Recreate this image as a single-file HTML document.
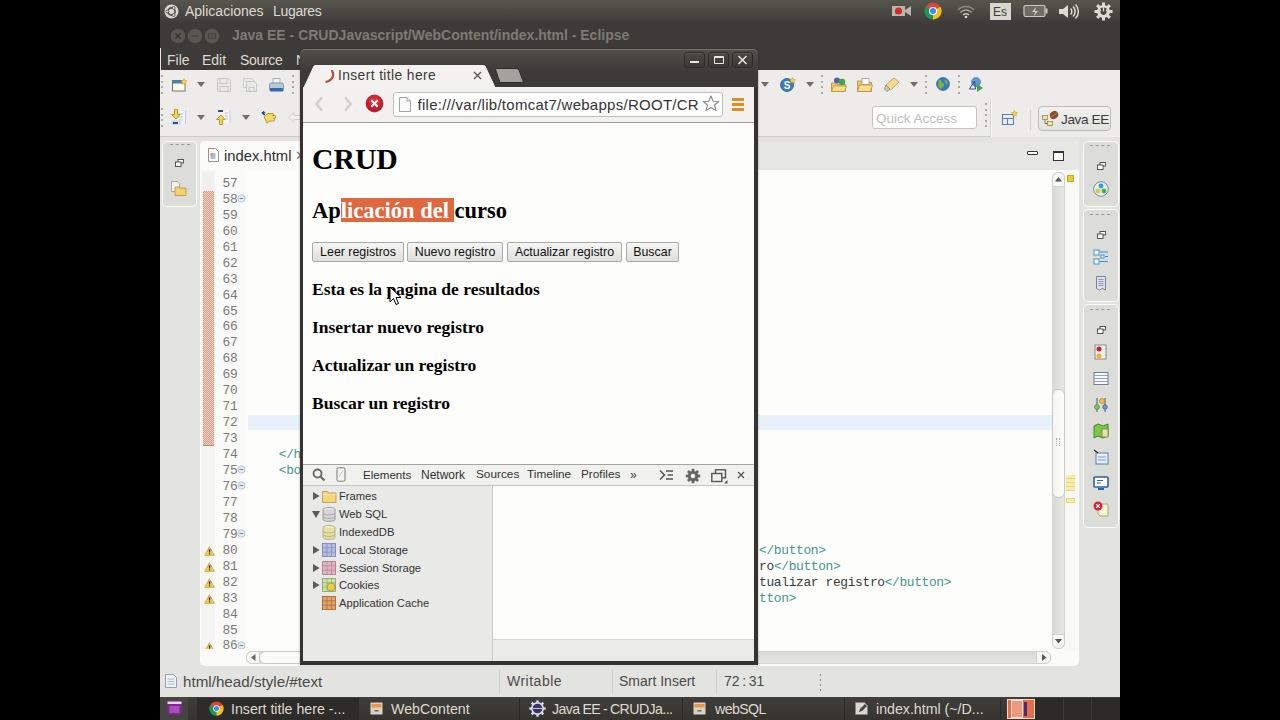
<!DOCTYPE html>
<html><head><meta charset="utf-8">
<style>
*{margin:0;padding:0;box-sizing:border-box}
html,body{width:1280px;height:720px;overflow:hidden;background:#000}
body{position:relative;font-family:"Liberation Sans",sans-serif}
.a{position:absolute}
.t{position:absolute;white-space:nowrap;line-height:1}
.mono{font-family:"Liberation Mono",monospace}
.serif{font-family:"Liberation Serif",serif}
</style></head><body>
<!-- screen -->
<div class="a" style="left:160px;top:0;width:960px;height:720px;background:#e3e3e0;overflow:hidden"></div>

<!-- top panel -->
<div class="a" style="left:160px;top:0;width:960px;height:22px;background:linear-gradient(#57564e,#3e3d39)"></div>
<!-- eclipse title + menubar -->
<div class="a" style="left:160px;top:22px;width:960px;height:48px;background:#3c3b37"></div>


<!-- ubuntu logo -->
<svg class="a" style="left:164px;top:4px" width="15" height="15" viewBox="0 0 15 15">
<circle cx="7.5" cy="7.5" r="7" fill="#dcd8cf"/>
<circle cx="7.5" cy="7.5" r="3.6" fill="none" stroke="#4a4943" stroke-width="1.6"/>
<circle cx="3.3" cy="7.5" r="1.5" fill="#dcd8cf" stroke="#4a4943" stroke-width="0.8"/>
<circle cx="9.6" cy="3.9" r="1.5" fill="#dcd8cf" stroke="#4a4943" stroke-width="0.8"/>
<circle cx="9.6" cy="11.1" r="1.5" fill="#dcd8cf" stroke="#4a4943" stroke-width="0.8"/>
</svg>
<div class="t" style="left:185px;top:4px;font-size:14px;color:#dfdbd2">Aplicaciones</div>
<div class="t" style="left:273px;top:4px;font-size:14px;color:#dfdbd2;letter-spacing:-0.3px">Lugares</div>

<!-- tray icons -->
<svg class="a" style="left:891px;top:3px" width="22" height="16" viewBox="0 0 22 16">
<path d="M1 3h13v10H1z" fill="#b9b6ae" rx="2"/><path d="M14 7l6-4v10l-6-4z" fill="#b9b6ae"/>
<circle cx="7.5" cy="8" r="3.6" fill="#d42c2c"/></svg>
<svg class="a" style="left:924px;top:2px" width="18" height="18" viewBox="0 0 18 18">
<circle cx="9" cy="9" r="8.5" fill="#db4437"/>
<path d="M9 9 L1.6 4.8 A8.5 8.5 0 0 0 9 17.5z" fill="#0f9d58"/>
<path d="M9 9 L16.4 4.8 A8.5 8.5 0 0 1 9 17.5z" fill="#f4c20d"/>
<circle cx="9" cy="9" r="4" fill="#fff"/><circle cx="9" cy="9" r="3" fill="#4285f4"/></svg>
<svg class="a" style="left:956px;top:4px" width="20" height="15" viewBox="0 0 20 15">
<path d="M2 6 A11 11 0 0 1 18 6" fill="none" stroke="#8d8a83" stroke-width="1.5"/>
<path d="M4.5 8.5 A7.5 7.5 0 0 1 15.5 8.5" fill="none" stroke="#a9a69f" stroke-width="1.5"/>
<path d="M7 11 A4 4 0 0 1 13 11" fill="none" stroke="#cfccc4" stroke-width="1.5"/>
<circle cx="10" cy="13" r="1.3" fill="#dfdbd2"/></svg>
<div class="a" style="left:990px;top:3px;width:21px;height:17px;background:#d9d6ce"></div>
<div class="t" style="left:993px;top:6px;font-size:12px;color:#3c3b37">Es</div>
<svg class="a" style="left:1023px;top:4px" width="26" height="14" viewBox="0 0 26 14">
<rect x="1" y="1.5" width="21" height="11" rx="1.5" fill="#6f6d67" stroke="#cdc9c1" stroke-width="1.2"/>
<rect x="22.5" y="4.5" width="2" height="5" fill="#cdc9c1"/>
<path d="M13 3 L9 8 h3 l-1 4 l4-5 h-3z" fill="#cdc9c1"/></svg>
<svg class="a" style="left:1058px;top:3px" width="22" height="17" viewBox="0 0 22 17">
<path d="M1 6h4l5-4v13l-5-4H1z" fill="#dfdbd2"/>
<path d="M12.5 5.5 A4 4 0 0 1 12.5 11.5" fill="none" stroke="#dfdbd2" stroke-width="1.5"/>
<path d="M15 3.5 A7 7 0 0 1 15 13.5" fill="none" stroke="#dfdbd2" stroke-width="1.5"/>
<path d="M17.5 1.5 A10 10 0 0 1 17.5 15.5" fill="none" stroke="#dfdbd2" stroke-width="1.5"/></svg>
<svg class="a" style="left:1094px;top:2px" width="19" height="19" viewBox="0 0 19 19">
<g fill="#dfdbd2"><circle cx="9.5" cy="9.5" r="6.5"/>
<rect x="8" y="0.5" width="3" height="4"/><rect x="8" y="14.5" width="3" height="4"/>
<rect x="0.5" y="8" width="4" height="3"/><rect x="14.5" y="8" width="4" height="3"/>
<rect x="8" y="0.5" width="3" height="4" transform="rotate(45 9.5 9.5)"/><rect x="8" y="14.5" width="3" height="4" transform="rotate(45 9.5 9.5)"/>
<rect x="0.5" y="8" width="4" height="3" transform="rotate(45 9.5 9.5)"/><rect x="14.5" y="8" width="4" height="3" transform="rotate(45 9.5 9.5)"/></g>
<circle cx="9.5" cy="9.5" r="4" fill="#45443f"/>
<path d="M6.8 7.5 A3.6 3.6 0 1 0 12.2 7.5" fill="none" stroke="#dfdbd2" stroke-width="1.4"/>
<rect x="8.8" y="5" width="1.4" height="4.5" fill="#dfdbd2"/></svg>

<!-- eclipse window buttons -->
<svg class="a" style="left:170px;top:28px" width="52" height="16" viewBox="0 0 52 16">
<circle cx="8" cy="8" r="7.3" fill="#57564f"/><circle cx="25" cy="8" r="7.3" fill="#57564f"/><circle cx="42" cy="8" r="7.3" fill="#57564f"/>
<path d="M5.3 5.3l5.4 5.4M10.7 5.3l-5.4 5.4" stroke="#35342f" stroke-width="1.4"/>
<rect x="21.5" y="7.3" width="7" height="1.4" fill="#45443f"/>
<rect x="38.6" y="5.6" width="6.8" height="4.8" fill="none" stroke="#45443f" stroke-width="1.2"/>
</svg>
<div class="t" style="left:232px;top:28px;font-size:14px;font-weight:bold;color:#7c7b74">Java EE - CRUDJavascript/WebContent/index.html - Eclipse</div>

<!-- menubar -->
<div class="a" style="left:160px;top:48px;width:1px;height:22px;background:#e8e6e0"></div>
<div class="t" style="left:167px;top:53px;font-size:14px;color:#dfdbd2">File</div>
<div class="t" style="left:202px;top:53px;font-size:14px;color:#dfdbd2">Edit</div>
<div class="t" style="left:240px;top:53px;font-size:14px;color:#dfdbd2;letter-spacing:-0.3px">Source</div>
<div class="t" style="left:296px;top:53px;font-size:14px;color:#dfdbd2">N</div>


<!-- eclipse toolbar -->
<div class="a" style="left:160px;top:70px;width:960px;height:67px;background:#edecea"></div>

<div class="a" style="left:161px;top:75.0px;width:2px;height:2px;background:#a9a8a4"></div><div class="a" style="left:161px;top:80.5px;width:2px;height:2px;background:#a9a8a4"></div><div class="a" style="left:161px;top:86.0px;width:2px;height:2px;background:#a9a8a4"></div><div class="a" style="left:161px;top:91.5px;width:2px;height:2px;background:#a9a8a4"></div><div class="a" style="left:161px;top:108.0px;width:2px;height:2px;background:#a9a8a4"></div><div class="a" style="left:161px;top:113.5px;width:2px;height:2px;background:#a9a8a4"></div><div class="a" style="left:161px;top:119.0px;width:2px;height:2px;background:#a9a8a4"></div><div class="a" style="left:161px;top:124.5px;width:2px;height:2px;background:#a9a8a4"></div><div class="a" style="left:292px;top:75.0px;width:2px;height:2px;background:#a9a8a4"></div><div class="a" style="left:292px;top:80.5px;width:2px;height:2px;background:#a9a8a4"></div><div class="a" style="left:292px;top:86.0px;width:2px;height:2px;background:#a9a8a4"></div><div class="a" style="left:292px;top:91.5px;width:2px;height:2px;background:#a9a8a4"></div><svg class="a" style="left:172px;top:78px" width="15" height="14" viewBox="0 0 15 14">
<rect x="0.5" y="2.5" width="12.5" height="10.5" fill="#fdfbe8" stroke="#6e7a76" stroke-width="1"/>
<rect x="1" y="3" width="11.5" height="2.5" fill="#3d84b8"/>
<path d="M12 0.5l1.2 2 2 .5-1.5 1.5.3 2-2-1-2 1 .3-2L9 3l2-.5z" fill="#f8d256" stroke="#c99a1e" stroke-width="0.5"/></svg><svg class="a" style="left:197px;top:82px" width="8" height="5" viewBox="0 0 8 5"><path d="M0 0h8L4 5z" fill="#6e6e6c"/></svg><svg class="a" style="left:197px;top:115px" width="8" height="5" viewBox="0 0 8 5"><path d="M0 0h8L4 5z" fill="#6e6e6c"/></svg><svg class="a" style="left:242px;top:115px" width="8" height="5" viewBox="0 0 8 5"><path d="M0 0h8L4 5z" fill="#6e6e6c"/></svg><svg class="a" style="left:217px;top:78px" width="14" height="14" viewBox="0 0 14 14">
<path d="M0.5 0.5h11l2 2v11H0.5z" fill="#e9e9e6" stroke="#c6c6c2"/><rect x="3" y="0.5" width="7" height="5" fill="none" stroke="#c6c6c2"/><rect x="3" y="8.5" width="8" height="5" fill="none" stroke="#c6c6c2"/></svg>
<svg class="a" style="left:243px;top:78px" width="15" height="14" viewBox="0 0 15 14">
<path d="M0.5 0.5h8l2 2v7H0.5z" fill="#e9e9e6" stroke="#cfcfcb"/><path d="M3.5 3.5h8l2 2v8H3.5z" fill="#e9e9e6" stroke="#c6c6c2"/><rect x="6" y="9.5" width="5" height="4" fill="none" stroke="#c6c6c2"/></svg>
<svg class="a" style="left:269px;top:78px" width="15" height="14" viewBox="0 0 15 14">
<rect x="4" y="0.5" width="7" height="6" fill="#f4f4f2" stroke="#a9b3bc"/>
<rect x="0.5" y="5" width="14" height="7" rx="2" fill="#b9c9d6" stroke="#7d98b0"/>
<rect x="0.5" y="10" width="14" height="3.5" rx="1.5" fill="#3b66a8"/></svg><svg class="a" style="left:171px;top:109px" width="15" height="16" viewBox="0 0 15 16">
<rect x="5" y="2" width="9" height="13" fill="#f2f4f8"/><path d="M7 5h5M7 8h5M8 11h4" stroke="#b7c3d3"/><rect x="14" y="2" width="1" height="13" fill="#c5c9cf"/>
<rect x="2" y="13" width="5" height="2" fill="#2c4b8a"/><rect x="1" y="12" width="8" height="4" fill="none" stroke="#b3c6e6" stroke-width="0.7"/>
<path d="M3.5 0.5h3v5h2.5L5 10 0.5 5.5H3.5z" fill="#f7d44d" stroke="#b98f18" stroke-width="0.9"/></svg>
<svg class="a" style="left:216px;top:109px" width="15" height="16" viewBox="0 0 15 16">
<rect x="5" y="1" width="9" height="13" fill="#f2f4f8"/><path d="M9 4h3M9 7h3M9 10h3" stroke="#b7c3d3"/><rect x="13.5" y="1" width="1" height="13" fill="#c5c9cf"/>
<rect x="2" y="1" width="5" height="2" fill="#2c4b8a"/>
<path d="M3.5 15.5h3v-5h2.5L5 6 0.5 10.5H3.5z" fill="#f7d44d" stroke="#b98f18" stroke-width="0.9"/></svg>
<svg class="a" style="left:261px;top:111px" width="16" height="13" viewBox="0 0 16 13">
<path d="M1 3 4 1M1 1l3 3M2.5 0v4M0.5 2h4" stroke="#1d3f8a" stroke-width="0.9"/>
<path d="M3 5.5l4-3h4.5c1.5 0 1.5 2 0 2h2c1.8 0 1.8 3 0 3h-1c1.5 0 1.5 2.5 0 2.5H9L6 12z" fill="#f7d869" stroke="#b38f1f" stroke-width="0.9"/></svg>
<svg class="a" style="left:288px;top:111px" width="13" height="13" viewBox="0 0 13 13">
<path d="M0.5 6.5 6 1.5v3h7v4H6v3z" fill="#f0f0ee" stroke="#cfcfcc"/></svg>
<svg class="a" style="left:761px;top:82px" width="8" height="5" viewBox="0 0 8 5"><path d="M0 0h8L4 5z" fill="#6e6e6c"/></svg><svg class="a" style="left:806px;top:82px" width="8" height="5" viewBox="0 0 8 5"><path d="M0 0h8L4 5z" fill="#6e6e6c"/></svg><svg class="a" style="left:910px;top:82px" width="8" height="5" viewBox="0 0 8 5"><path d="M0 0h8L4 5z" fill="#6e6e6c"/></svg><div class="a" style="left:821px;top:75.0px;width:2px;height:2px;background:#a9a8a4"></div><div class="a" style="left:821px;top:80.5px;width:2px;height:2px;background:#a9a8a4"></div><div class="a" style="left:821px;top:86.0px;width:2px;height:2px;background:#a9a8a4"></div><div class="a" style="left:821px;top:91.5px;width:2px;height:2px;background:#a9a8a4"></div><div class="a" style="left:925px;top:75.0px;width:2px;height:2px;background:#a9a8a4"></div><div class="a" style="left:925px;top:80.5px;width:2px;height:2px;background:#a9a8a4"></div><div class="a" style="left:925px;top:86.0px;width:2px;height:2px;background:#a9a8a4"></div><div class="a" style="left:925px;top:91.5px;width:2px;height:2px;background:#a9a8a4"></div><div class="a" style="left:958px;top:75.0px;width:2px;height:2px;background:#a9a8a4"></div><div class="a" style="left:958px;top:80.5px;width:2px;height:2px;background:#a9a8a4"></div><div class="a" style="left:958px;top:86.0px;width:2px;height:2px;background:#a9a8a4"></div><div class="a" style="left:958px;top:91.5px;width:2px;height:2px;background:#a9a8a4"></div><svg class="a" style="left:780px;top:77px" width="16" height="15" viewBox="0 0 16 15">
<circle cx="7" cy="8" r="6.5" fill="#3b7bbf" stroke="#2a5c95" stroke-width="0.8"/>
<text x="7" y="12" font-family="Liberation Sans" font-weight="bold" font-size="10" fill="#fff" text-anchor="middle">S</text>
<path d="M12.5 0.5l1 1.8 2 .4-1.4 1.4.3 2-1.9-.9-1.9.9.3-2L9.5 2.7l2-.4z" fill="#f5d34a" stroke="#b89420" stroke-width="0.5"/></svg>
<svg class="a" style="left:831px;top:77px" width="16" height="15" viewBox="0 0 16 15">
<path d="M0.5 6h5l1 1.5h8v7H0.5z" fill="#f3c564" stroke="#b98e35" stroke-width="0.8"/>
<path d="M2.5 9h13l-2 5.5H0.5z" fill="#fbdf8f" stroke="#b98e35" stroke-width="0.8"/>
<circle cx="6" cy="3.5" r="3" fill="#5c5ca8"/><circle cx="11" cy="5" r="3.2" fill="#3fa44a"/></svg>
<svg class="a" style="left:857px;top:78px" width="16" height="14" viewBox="0 0 16 14">
<path d="M0.5 3h5l1 1.5h8v9H0.5z" fill="#f3c564" stroke="#b98e35" stroke-width="0.8"/>
<rect x="5" y="0.5" width="7" height="6" fill="#fff" stroke="#8aa0b5" stroke-width="0.8"/>
<path d="M2.5 7h13l-2 6.5H0.5z" fill="#fbdf8f" stroke="#b98e35" stroke-width="0.8"/></svg>
<svg class="a" style="left:884px;top:77px" width="16" height="15" viewBox="0 0 16 15">
<path d="M10 1l5 4-8 8-4-1-1-4z" fill="#f6d98a" stroke="#b99a52" stroke-width="0.8"/>
<path d="M2 8l4 4-3 2.5L0.5 12z" fill="#c9c4b6" stroke="#8c877a" stroke-width="0.8"/></svg>
<svg class="a" style="left:936px;top:77px" width="14" height="14" viewBox="0 0 14 14">
<circle cx="7" cy="7" r="6.5" fill="#3479c2" stroke="#24558c" stroke-width="0.6"/>
<path d="M4 2.5c2 1 1 3 3 3.5s1 3 -.5 4.5S3 12 2.5 9 1.5 4 4 2.5z" fill="#79b544"/>
<path d="M9 2c2 1 3 3 2.5 5s-1.5 1-2-1S8 3 9 2z" fill="#79b544"/></svg>
<svg class="a" style="left:969px;top:77px" width="15" height="15" viewBox="0 0 15 15">
<circle cx="7" cy="5" r="4.5" fill="#5f9bcf" stroke="#3a6f9e" stroke-width="0.6"/>
<path d="M0.5 12l5-8 1 8z" fill="none" stroke="#2c4f8c" stroke-width="1"/>
<path d="M8 7v8l6-4z" fill="#3aa44a"/></svg>
<div class="a" style="left:872px;top:106px;width:105px;height:23px;background:#fff;border:1px solid #c3c3bf;border-radius:3px"></div>
<div class="t" style="left:876px;top:111.5px;font-size:13.5px;color:#bdbdb9">Quick Access</div><div class="a" style="left:985px;top:103.0px;width:2px;height:2px;background:#a9a8a4"></div><div class="a" style="left:985px;top:108.5px;width:2px;height:2px;background:#a9a8a4"></div><div class="a" style="left:985px;top:114.0px;width:2px;height:2px;background:#a9a8a4"></div><div class="a" style="left:985px;top:119.5px;width:2px;height:2px;background:#a9a8a4"></div><div class="a" style="left:985px;top:125.0px;width:2px;height:2px;background:#a9a8a4"></div><div class="a" style="left:990px;top:100px;width:1px;height:37px;background:#d5d5d1"></div><div class="a" style="left:991px;top:100px;width:1px;height:37px;background:#fafaf9"></div><svg class="a" style="left:1002px;top:110px" width="16" height="16" viewBox="0 0 16 16">
<rect x="0.5" y="4.5" width="11" height="10" fill="#e8eef6" stroke="#5a7ea8"/>
<path d="M0.5 8.5h11M5.5 8.5v6" stroke="#5a7ea8"/>
<path d="M12.5 0.5l1 1.8 2 .4-1.4 1.4.3 2-1.9-.9-1.9.9.3-2L9.5 2.7l2-.4z" fill="#f5d34a" stroke="#b89420" stroke-width="0.5"/></svg>
<div class="a" style="left:1030px;top:110px;width:1px;height:20px;background:#d0d0cc"></div>
<div class="a" style="left:1038px;top:106px;width:73px;height:25px;background:linear-gradient(#f1f1ef,#e2e2df);border:1px solid #bdbdb9;border-radius:4px"></div>
<svg class="a" style="left:1042px;top:110px" width="17" height="17" viewBox="0 0 17 17">
<rect x="0.5" y="5.5" width="5" height="4" fill="#f8e39a" stroke="#9c8b4c" stroke-width="0.8"/>
<rect x="5.5" y="11.5" width="5" height="4" fill="#f8e39a" stroke="#9c8b4c" stroke-width="0.8"/>
<path d="M3 9.5v4h2.5" fill="none" stroke="#555" stroke-width="0.8"/>
<ellipse cx="12" cy="5" rx="4.3" ry="3.8" fill="#8a4a2a" transform="rotate(-30 12 5)"/>
<path d="M9 7l6-4" stroke="#c9885d" stroke-width="0.8"/></svg>
<div class="t" style="left:1061px;top:112.5px;font-size:13.6px;color:#3c3c3c;letter-spacing:-0.4px">Java EE</div>
<div class="a" style="left:160px;top:136px;width:830px;height:1px;background:#cdccc8"></div>


<!-- left trim stack -->
<div class="a" style="left:162px;top:141px;width:35px;height:66px;background:#dcdcd8;border:1px solid #fbfbfa;border-radius:5px"></div>

<!-- right trim -->
<div class="a" style="left:1083px;top:141px;width:36px;height:66px;background:#dcdcd8;border:1px solid #fbfbfa;border-radius:5px"></div>
<div class="a" style="left:1083px;top:209px;width:36px;height:93px;background:#dcdcd8;border:1px solid #fbfbfa;border-radius:5px"></div>
<div class="a" style="left:1083px;top:304px;width:36px;height:224px;background:#dcdcd8;border:1px solid #fbfbfa;border-radius:5px"></div>

<!-- editor frame -->
<div class="a" style="left:200px;top:141px;width:879px;height:525px;background:#fdfdfb;border-radius:5px;overflow:hidden">
  <div class="a" style="left:0;top:0;width:879px;height:29px;background:#e6e6e3"></div>
</div>

<div class="a" style="left:200px;top:141px;width:130px;height:29px;background:#fbfbf9;border-top-left-radius:5px"></div>
<svg class="a" style="left:208px;top:148px" width="11" height="14" viewBox="0 0 11 14">
<path d="M0.5 0.5h7l3 3v10H0.5z" fill="#fcfcf6" stroke="#8c8a78" stroke-width="0.9"/>
<rect x="2.5" y="5" width="5" height="6" fill="#9cc6d9"/><rect x="2.5" y="5" width="3" height="3" fill="#d98f8f"/></svg>
<div class="t" style="left:224px;top:149px;font-size:14.8px;color:#2e2e2e">index.html</div>
<div class="t" style="left:295px;top:149px;font-size:13px;color:#777">&#10005;</div>
<div class="a" style="left:1027px;top:150.5px;width:11px;height:4.5px;border:1.3px solid #333;background:#fff;border-radius:1px"></div>
<div class="a" style="left:1053px;top:151px;width:10.5px;height:9.5px;border:1px solid #333;border-top-width:2px;background:#fff"></div>
<div class="a" style="left:201px;top:170px;width:14px;height:481px;background:#f4f4f1"></div>
<div class="a" style="left:215px;top:170px;width:31px;height:481px;background:#fafaf8"></div>
<div class="a" style="left:203px;top:172px;width:11px;height:18px;background:#f0f0ed"></div>
<div class="a" style="left:203px;top:191px;width:11px;height:255px;background:repeating-conic-gradient(#d49a84 0 25%,#efd3c6 0 50%) 0 0/2px 2px;border-bottom:1px solid #e0805f"></div>
<div class="a" style="left:248px;top:415px;width:805px;height:15px;background:#e8f1fb"></div>
<!--LINES-->
<div class="t mono" style="left:222.5px;top:177.90px;font-size:12.9px;letter-spacing:-0.35px;color:#7a7a78">57</div>
<div class="t mono" style="left:222.5px;top:193.85px;font-size:12.9px;letter-spacing:-0.35px;color:#7a7a78">58</div>
<svg class="a" style="left:236.6px;top:193.95px" width="9" height="9" viewBox="0 0 9 9"><circle cx="4.5" cy="4.5" r="3.6" fill="#e6edf2" stroke="#a9bccb" stroke-width="0.8"/><path d="M2.6 4.5h3.8" stroke="#6f879c" stroke-width="1"/></svg>
<div class="t mono" style="left:222.5px;top:209.80px;font-size:12.9px;letter-spacing:-0.35px;color:#7a7a78">59</div>
<div class="t mono" style="left:222.5px;top:225.75px;font-size:12.9px;letter-spacing:-0.35px;color:#7a7a78">60</div>
<div class="t mono" style="left:222.5px;top:241.70px;font-size:12.9px;letter-spacing:-0.35px;color:#7a7a78">61</div>
<div class="t mono" style="left:222.5px;top:257.65px;font-size:12.9px;letter-spacing:-0.35px;color:#7a7a78">62</div>
<div class="t mono" style="left:222.5px;top:273.60px;font-size:12.9px;letter-spacing:-0.35px;color:#7a7a78">63</div>
<div class="t mono" style="left:222.5px;top:289.55px;font-size:12.9px;letter-spacing:-0.35px;color:#7a7a78">64</div>
<div class="t mono" style="left:222.5px;top:305.50px;font-size:12.9px;letter-spacing:-0.35px;color:#7a7a78">65</div>
<div class="t mono" style="left:222.5px;top:321.45px;font-size:12.9px;letter-spacing:-0.35px;color:#7a7a78">66</div>
<div class="t mono" style="left:222.5px;top:337.40px;font-size:12.9px;letter-spacing:-0.35px;color:#7a7a78">67</div>
<div class="t mono" style="left:222.5px;top:353.35px;font-size:12.9px;letter-spacing:-0.35px;color:#7a7a78">68</div>
<div class="t mono" style="left:222.5px;top:369.30px;font-size:12.9px;letter-spacing:-0.35px;color:#7a7a78">69</div>
<div class="t mono" style="left:222.5px;top:385.25px;font-size:12.9px;letter-spacing:-0.35px;color:#7a7a78">70</div>
<div class="t mono" style="left:222.5px;top:401.20px;font-size:12.9px;letter-spacing:-0.35px;color:#7a7a78">71</div>
<div class="t mono" style="left:222.5px;top:417.15px;font-size:12.9px;letter-spacing:-0.35px;color:#7a7a78">72</div>
<div class="t mono" style="left:222.5px;top:433.10px;font-size:12.9px;letter-spacing:-0.35px;color:#7a7a78">73</div>
<div class="t mono" style="left:222.5px;top:449.05px;font-size:12.9px;letter-spacing:-0.35px;color:#7a7a78">74</div>
<div class="t mono" style="left:222.5px;top:465.00px;font-size:12.9px;letter-spacing:-0.35px;color:#7a7a78">75</div>
<svg class="a" style="left:236.6px;top:465.10px" width="9" height="9" viewBox="0 0 9 9"><circle cx="4.5" cy="4.5" r="3.6" fill="#e6edf2" stroke="#a9bccb" stroke-width="0.8"/><path d="M2.6 4.5h3.8" stroke="#6f879c" stroke-width="1"/></svg>
<div class="t mono" style="left:222.5px;top:480.95px;font-size:12.9px;letter-spacing:-0.35px;color:#7a7a78">76</div>
<svg class="a" style="left:236.6px;top:481.05px" width="9" height="9" viewBox="0 0 9 9"><circle cx="4.5" cy="4.5" r="3.6" fill="#e6edf2" stroke="#a9bccb" stroke-width="0.8"/><path d="M2.6 4.5h3.8" stroke="#6f879c" stroke-width="1"/></svg>
<div class="t mono" style="left:222.5px;top:496.90px;font-size:12.9px;letter-spacing:-0.35px;color:#7a7a78">77</div>
<div class="t mono" style="left:222.5px;top:512.85px;font-size:12.9px;letter-spacing:-0.35px;color:#7a7a78">78</div>
<div class="t mono" style="left:222.5px;top:528.80px;font-size:12.9px;letter-spacing:-0.35px;color:#7a7a78">79</div>
<svg class="a" style="left:236.6px;top:528.90px" width="9" height="9" viewBox="0 0 9 9"><circle cx="4.5" cy="4.5" r="3.6" fill="#e6edf2" stroke="#a9bccb" stroke-width="0.8"/><path d="M2.6 4.5h3.8" stroke="#6f879c" stroke-width="1"/></svg>
<div class="t mono" style="left:222.5px;top:544.75px;font-size:12.9px;letter-spacing:-0.35px;color:#7a7a78">80</div>
<svg class="a" style="left:203.5px;top:546.15px" width="11" height="10" viewBox="0 0 11 10"><path d="M5.5 0.8L10.3 9.3H0.7z" fill="#f1d162" stroke="#c9a43a" stroke-width="0.9" stroke-linejoin="round"/><rect x="4.9" y="3.2" width="1.3" height="3.4" fill="#333"/><rect x="4.9" y="7.2" width="1.3" height="1.2" fill="#333"/></svg>
<div class="t mono" style="left:222.5px;top:560.70px;font-size:12.9px;letter-spacing:-0.35px;color:#7a7a78">81</div>
<svg class="a" style="left:203.5px;top:562.10px" width="11" height="10" viewBox="0 0 11 10"><path d="M5.5 0.8L10.3 9.3H0.7z" fill="#f1d162" stroke="#c9a43a" stroke-width="0.9" stroke-linejoin="round"/><rect x="4.9" y="3.2" width="1.3" height="3.4" fill="#333"/><rect x="4.9" y="7.2" width="1.3" height="1.2" fill="#333"/></svg>
<div class="t mono" style="left:222.5px;top:576.65px;font-size:12.9px;letter-spacing:-0.35px;color:#7a7a78">82</div>
<svg class="a" style="left:203.5px;top:578.05px" width="11" height="10" viewBox="0 0 11 10"><path d="M5.5 0.8L10.3 9.3H0.7z" fill="#f1d162" stroke="#c9a43a" stroke-width="0.9" stroke-linejoin="round"/><rect x="4.9" y="3.2" width="1.3" height="3.4" fill="#333"/><rect x="4.9" y="7.2" width="1.3" height="1.2" fill="#333"/></svg>
<div class="t mono" style="left:222.5px;top:592.60px;font-size:12.9px;letter-spacing:-0.35px;color:#7a7a78">83</div>
<svg class="a" style="left:203.5px;top:594.00px" width="11" height="10" viewBox="0 0 11 10"><path d="M5.5 0.8L10.3 9.3H0.7z" fill="#f1d162" stroke="#c9a43a" stroke-width="0.9" stroke-linejoin="round"/><rect x="4.9" y="3.2" width="1.3" height="3.4" fill="#333"/><rect x="4.9" y="7.2" width="1.3" height="1.2" fill="#333"/></svg>
<div class="t mono" style="left:222.5px;top:608.55px;font-size:12.9px;letter-spacing:-0.35px;color:#7a7a78">84</div>
<div class="t mono" style="left:222.5px;top:624.50px;font-size:12.9px;letter-spacing:-0.35px;color:#7a7a78">85</div>
<div class="t mono" style="left:222.5px;top:640.45px;font-size:12.9px;letter-spacing:-0.35px;color:#7a7a78">86</div>
<svg class="a" style="left:236.6px;top:640.55px" width="9" height="9" viewBox="0 0 9 9"><circle cx="4.5" cy="4.5" r="3.6" fill="#e6edf2" stroke="#a9bccb" stroke-width="0.8"/><path d="M2.6 4.5h3.8" stroke="#6f879c" stroke-width="1"/></svg>
<svg class="a" style="left:203.5px;top:641.85px" width="11" height="10" viewBox="0 0 11 10"><path d="M5.5 0.8L10.3 9.3H0.7z" fill="#f1d162" stroke="#c9a43a" stroke-width="0.9" stroke-linejoin="round"/><rect x="4.9" y="3.2" width="1.3" height="3.4" fill="#333"/><rect x="4.9" y="7.2" width="1.3" height="1.2" fill="#333"/></svg>
<div class="t mono" style="left:278.8px;top:449.05px;font-size:12.9px;letter-spacing:-0.35px"><span style="color:#45968c">&lt;/head&gt;</span></div>
<div class="t mono" style="left:278.8px;top:465.00px;font-size:12.9px;letter-spacing:-0.35px"><span style="color:#45968c">&lt;body&gt;</span></div>
<div class="t mono" style="left:759.1px;top:544.75px;font-size:12.9px;letter-spacing:-0.35px"><span style="color:#45968c">&lt;/button&gt;</span></div>
<div class="t mono" style="left:759.1px;top:560.70px;font-size:12.9px;letter-spacing:-0.35px"><span style="color:#3a3a3a">ro</span><span style="color:#45968c">&lt;/button&gt;</span></div>
<div class="t mono" style="left:759.1px;top:576.65px;font-size:12.9px;letter-spacing:-0.35px"><span style="color:#3a3a3a">tualizar registro</span><span style="color:#45968c">&lt;/button&gt;</span></div>
<div class="t mono" style="left:759.1px;top:592.60px;font-size:12.9px;letter-spacing:-0.35px"><span style="color:#45968c">tton&gt;</span></div>
<!--/LINES-->
<div class="a" style="left:201px;top:648.5px;width:877px;height:16px;background:#fbfbf9;border-radius:0 0 5px 5px"></div>
<div class="a" style="left:1052px;top:172px;width:13px;height:477px;background:linear-gradient(90deg,#d9d9d6,#e6e6e3);border-radius:6px;border:1px solid #d3d3cf"></div>
<div class="a" style="left:1052px;top:172px;width:13px;height:15px;background:#f7f7f5;border-radius:6px 6px 2px 2px;border:1px solid #cfcfcb"></div>
<svg class="a" style="left:1055px;top:177px" width="7" height="5" viewBox="0 0 7 5"><path d="M0 4.5h7L3.5 0z" fill="#555"/></svg>
<div class="a" style="left:1052px;top:389px;width:13px;height:109px;background:linear-gradient(90deg,#f3f3f1,#fdfdfc);border-radius:6px;border:1px solid #c9c9c5"></div>
<div class="a" style="left:1056px;top:438px;width:1px;height:8px;border-left:1px dotted #aaa"></div><div class="a" style="left:1059px;top:438px;width:1px;height:8px;border-left:1px dotted #aaa"></div>
<div class="a" style="left:1052px;top:634px;width:13px;height:15px;background:#f7f7f5;border-radius:2px 2px 6px 6px;border:1px solid #cfcfcb"></div>
<svg class="a" style="left:1055px;top:639px" width="7" height="5" viewBox="0 0 7 5"><path d="M0 0h7L3.5 4.5z" fill="#555"/></svg>
<div class="a" style="left:1065px;top:170px;width:13px;height:481px;background:#f8f8f6"></div>
<div class="a" style="left:1067px;top:175px;width:7px;height:7px;background:#e8c93a;border:1px solid #c9a820"></div>
<div class="a" style="left:1066px;top:475px;width:9px;height:16px;background:repeating-linear-gradient(#f7eda6 0 3px,#e6d77a 3px 4px)"></div>
<div class="a" style="left:1066px;top:498px;width:9px;height:4.5px;background:#f7eda6;border:1px solid #e6d77a"></div>
<div class="a" style="left:246px;top:651px;width:805px;height:13px;background:linear-gradient(#d9d9d6,#e6e6e3);border-radius:6px;border:1px solid #d3d3cf"></div>
<div class="a" style="left:246px;top:651px;width:14px;height:13px;background:#f7f7f5;border-radius:6px 2px 2px 6px;border:1px solid #cfcfcb"></div>
<svg class="a" style="left:251px;top:654px" width="5" height="7" viewBox="0 0 5 7"><path d="M4.5 0v7L0 3.5z" fill="#666"/></svg>
<div class="a" style="left:259px;top:651px;width:60px;height:13px;background:#fafaf8;border-radius:6px;border:1px solid #c9c9c5"></div>
<div class="a" style="left:1036px;top:651px;width:15px;height:13px;background:#f7f7f5;border-radius:2px 6px 6px 2px;border:1px solid #cfcfcb"></div>
<svg class="a" style="left:1042px;top:654px" width="5" height="7" viewBox="0 0 5 7"><path d="M0 0v7L4.5 3.5z" fill="#555"/></svg>
<div class="a" style="left:170px;top:144px;width:20px;height:1px;border-top:1px dashed #9a9a96"></div>
<svg class="a" style="left:175px;top:158.5px" width="9" height="8" viewBox="0 0 9 8"><rect x="3" y="0.5" width="5.5" height="3.5" fill="#fff" stroke="#444" stroke-width="0.9"/><rect x="0.5" y="3" width="5.5" height="4.5" fill="#fff" stroke="#444" stroke-width="0.9"/></svg>
<svg class="a" style="left:171px;top:181px" width="16" height="15" viewBox="0 0 16 15"><path d="M0.5 0.5h6l2 2v8H0.5z" fill="#f4f4f2" stroke="#999" stroke-width="0.8"/><path d="M4 6h4l1 1h6v7.5H4z" fill="#f5d26b" stroke="#b69234" stroke-width="0.8"/></svg>
<div class="a" style="left:1090px;top:145px;width:20px;height:1px;border-top:1px dashed #9a9a96"></div><svg class="a" style="left:1097px;top:162px" width="9" height="8" viewBox="0 0 9 8"><rect x="3" y="0.5" width="5.5" height="3.5" fill="#fff" stroke="#444" stroke-width="0.9"/><rect x="0.5" y="3" width="5.5" height="4.5" fill="#fff" stroke="#444" stroke-width="0.9"/></svg><div class="a" style="left:1090px;top:214px;width:20px;height:1px;border-top:1px dashed #9a9a96"></div><svg class="a" style="left:1097px;top:231px" width="9" height="8" viewBox="0 0 9 8"><rect x="3" y="0.5" width="5.5" height="3.5" fill="#fff" stroke="#444" stroke-width="0.9"/><rect x="0.5" y="3" width="5.5" height="4.5" fill="#fff" stroke="#444" stroke-width="0.9"/></svg><div class="a" style="left:1090px;top:309px;width:20px;height:1px;border-top:1px dashed #9a9a96"></div><svg class="a" style="left:1097px;top:326px" width="9" height="8" viewBox="0 0 9 8"><rect x="3" y="0.5" width="5.5" height="3.5" fill="#fff" stroke="#444" stroke-width="0.9"/><rect x="0.5" y="3" width="5.5" height="4.5" fill="#fff" stroke="#444" stroke-width="0.9"/></svg><svg class="a" style="left:1093px;top:181px" width="16" height="16" viewBox="0 0 16 16"><circle cx="8" cy="8" r="7.3" fill="#e8eef0" stroke="#7c8a90"/><circle cx="8" cy="5" r="2.4" fill="#29a0d8"/><circle cx="5" cy="10" r="2.4" fill="#e3c63a"/><circle cx="11" cy="10" r="2.4" fill="#3bb54a"/></svg><svg class="a" style="left:1093px;top:249px" width="16" height="16" viewBox="0 0 16 16"><rect x="1" y="1" width="5" height="5" fill="#fff" stroke="#3d8fd0"/><rect x="1" y="10" width="5" height="5" fill="#fff" stroke="#3d8fd0"/><rect x="8" y="6" width="3" height="3" fill="#fff" stroke="#3d8fd0"/><path d="M7 3h8M12 7.5h3M7 12.5h8" stroke="#3d8fd0"/></svg><svg class="a" style="left:1093px;top:276px" width="16" height="16" viewBox="0 0 16 16"><path d="M3.5 0.5h9v13.5l-3-1.5-3 1.5-3-1.5z" fill="#dfe0ee" stroke="#7c80a0"/><path d="M5.5 3.5h5M5.5 5.5h5M5.5 7.5h5M5.5 9.5h5" stroke="#7c80a0" stroke-width="0.8"/></svg><svg class="a" style="left:1093px;top:344px" width="16" height="16" viewBox="0 0 16 16"><rect x="2" y="1" width="11" height="14" fill="#f4f0e6" stroke="#8a8a8a"/><circle cx="6" cy="5" r="2.5" fill="#c8203c"/><circle cx="6" cy="12" r="2.5" fill="#f0b030"/></svg><svg class="a" style="left:1093px;top:371px" width="16" height="16" viewBox="0 0 16 16"><rect x="1" y="1.5" width="14" height="12" fill="#f8f8f8" stroke="#6e7e96"/><path d="M1 4.5h14M1 7.5h14M1 10.5h14" stroke="#7d8ca2" stroke-width="0.8"/></svg><svg class="a" style="left:1093px;top:397px" width="16" height="16" viewBox="0 0 16 16"><path d="M4 1v14M12 1v14" stroke="#3a5a9a"/><circle cx="4" cy="10" r="2.5" fill="#7ec850" stroke="#3a7a30" stroke-width="0.6"/><circle cx="9" cy="4" r="2.5" fill="#f2c33a" stroke="#a07a1a" stroke-width="0.6"/><circle cx="12" cy="10" r="2.3" fill="#6a9ad8" stroke="#2a4a8a" stroke-width="0.6"/></svg><svg class="a" style="left:1093px;top:423px" width="16" height="16" viewBox="0 0 16 16"><path d="M1 3l4-2 5 2 5-2v12l-5 2-5-2-4 2z" fill="#7ec64a" stroke="#3f8a2a"/><rect x="9" y="6" width="6" height="8" fill="#e8e0b0" stroke="#7a7a4a" stroke-width="0.8"/></svg><svg class="a" style="left:1093px;top:449px" width="16" height="16" viewBox="0 0 16 16"><rect x="3" y="4" width="12" height="11" fill="#e8eef8" stroke="#5a7eb0"/><path d="M5 8h8M5 11h8" stroke="#7a9ac8"/><path d="M1 1l4 3" stroke="#222" stroke-width="1.2"/></svg><svg class="a" style="left:1093px;top:475px" width="16" height="16" viewBox="0 0 16 16"><rect x="1" y="2" width="14" height="10" rx="1" fill="#fff" stroke="#2e5fa0" stroke-width="1.6"/><path d="M4 5.5h6M4 8h4" stroke="#2e5fa0"/><rect x="5" y="13" width="6" height="2" fill="#2e5fa0"/></svg><svg class="a" style="left:1093px;top:501px" width="16" height="16" viewBox="0 0 16 16"><path d="M5 3h10v12H7l-2-2z" fill="#f8f4d8" stroke="#a9a67a"/><circle cx="5" cy="5" r="4.5" fill="#d8253a"/><path d="M3.2 3.2l3.6 3.6M6.8 3.2l-3.6 3.6" stroke="#fff" stroke-width="1.2"/></svg>

<svg class="a" style="left:165px;top:674px" width="12" height="14" viewBox="0 0 12 14">
<path d="M0.5 0.5h8l3 3v10H0.5z" fill="#f0f3f8" stroke="#8c96a8" stroke-width="0.9"/><path d="M2.5 5h7M2.5 7.5h7M2.5 10h7" stroke="#9aa8c0" stroke-width="0.8"/></svg>
<div class="t" style="left:183px;top:674px;font-size:15.2px;color:#4a4a48">html/head/style/#text</div>
<div class="a" style="left:499px;top:669px;width:1px;height:26px;background:#d0d0cc"></div>
<div class="a" style="left:612px;top:669px;width:1px;height:26px;background:#d0d0cc"></div>
<div class="a" style="left:716px;top:669px;width:1px;height:26px;background:#d0d0cc"></div>
<div class="t" style="left:507px;top:674px;font-size:14px;color:#4a4a48;letter-spacing:0.5px">Writable</div>
<div class="t" style="left:619px;top:674px;font-size:14px;color:#4a4a48">Smart Insert</div>
<div class="t" style="left:724px;top:674px;font-size:14px;color:#4a4a48;word-spacing:-1.3px">72 : 31</div>
<div class="a" style="left:820px;top:674.0px;width:1px;height:2px;background:#8a8a86"></div><div class="a" style="left:820px;top:679.0px;width:1px;height:2px;background:#8a8a86"></div><div class="a" style="left:820px;top:684.0px;width:1px;height:2px;background:#8a8a86"></div><div class="a" style="left:820px;top:689.0px;width:1px;height:2px;background:#8a8a86"></div>

<!-- taskbar -->
<div class="a" style="left:160px;top:697px;width:960px;height:23px;background:linear-gradient(#3f3e3a,#35342f)"></div>
<div class="a" style="left:160px;top:697px;width:28px;height:23px;background:#45443f"></div>
<div class="a" style="left:197px;top:698px;width:162px;height:22px;background:#2d2c28"></div>
<div class="a" style="left:519px;top:698px;width:1px;height:22px;background:#2a2925"></div>
<div class="a" style="left:682px;top:698px;width:1px;height:22px;background:#2a2925"></div>
<div class="a" style="left:844px;top:698px;width:1px;height:22px;background:#2a2925"></div>
<div class="a" style="left:1000px;top:698px;width:1px;height:22px;background:#2a2925"></div>
<svg class="a" style="left:167px;top:701px" width="15" height="14" viewBox="0 0 15 14"><rect x="0.5" y="0.5" width="14" height="13" rx="1" fill="#7d2a8c"/><rect x="0.5" y="0.5" width="14" height="2.5" fill="#e5d5ea"/><rect x="2.5" y="5" width="10" height="7" fill="#a84cc0"/></svg>
<svg class="a" style="left:209px;top:701px" width="15" height="15" viewBox="0 0 18 18">
<circle cx="9" cy="9" r="8.5" fill="#db4437"/>
<path d="M9 9 L1.6 4.8 A8.5 8.5 0 0 0 9 17.5z" fill="#0f9d58"/>
<path d="M9 9 L16.4 4.8 A8.5 8.5 0 0 1 9 17.5z" fill="#f4c20d"/>
<circle cx="9" cy="9" r="4" fill="#fff"/><circle cx="9" cy="9" r="3" fill="#4285f4"/></svg>
<div class="t" style="left:231px;top:702px;font-size:14.2px;color:#dfdbd2">Insert title here -...</div>
<svg class="a" style="left:370px;top:702px" width="13" height="13" viewBox="0 0 13 13"><rect x="0.5" y="0.5" width="12" height="12" rx="1" fill="#d6d3cb" stroke="#8a877f" stroke-width="0.8"/><rect x="1.5" y="2" width="10" height="3.5" fill="#e7964a"/><rect x="4.5" y="8" width="4" height="1.5" fill="#666"/></svg>
<div class="t" style="left:391px;top:702px;font-size:14.2px;color:#dfdbd2">WebContent</div>
<svg class="a" style="left:529px;top:700px" width="17" height="17" viewBox="0 0 17 17"><g fill="#dcd8ee"><circle cx="8.5" cy="8.5" r="6.5"/>
<g id="tt"><rect x="7.3" y="0.3" width="2.4" height="3"/><rect x="7.3" y="13.7" width="2.4" height="3"/><rect x="0.3" y="7.3" width="3" height="2.4"/><rect x="13.7" y="7.3" width="3" height="2.4"/></g>
<g transform="rotate(45 8.5 8.5)"><rect x="7.3" y="0.3" width="2.4" height="3"/><rect x="7.3" y="13.7" width="2.4" height="3"/><rect x="0.3" y="7.3" width="3" height="2.4"/><rect x="13.7" y="7.3" width="3" height="2.4"/></g></g>
<circle cx="8.5" cy="8.5" r="4.8" fill="#3a3260"/><path d="M4 8.5h9" stroke="#dcd8ee" stroke-width="0.9"/></svg>
<div class="t" style="left:552px;top:702px;font-size:14.2px;color:#dfdbd2;letter-spacing:-0.6px;word-spacing:-0.5px">Java EE - CRUDJa...</div>
<svg class="a" style="left:693px;top:702px" width="13" height="13" viewBox="0 0 13 13"><rect x="0.5" y="0.5" width="12" height="12" rx="1" fill="#d6d3cb" stroke="#8a877f" stroke-width="0.8"/><rect x="1.5" y="2" width="10" height="3.5" fill="#e7964a"/><rect x="4.5" y="8" width="4" height="1.5" fill="#666"/></svg>
<div class="t" style="left:715px;top:702px;font-size:14.2px;color:#dfdbd2;letter-spacing:-0.6px">webSQL</div>
<svg class="a" style="left:855px;top:702px" width="13" height="13" viewBox="0 0 13 13"><path d="M0.5 0.5h9l3 3v9H0.5z" fill="#d8d6d0" stroke="#8a877f" stroke-width="0.8"/><path d="M4 10l1-3 5-5 2 2-5 5z" fill="#444"/></svg>
<div class="t" style="left:876px;top:702px;font-size:14.2px;color:#dfdbd2">index.html (~/D...</div>
<div class="a" style="left:1035px;top:698px;width:85px;height:22px;background:#2b2a26"></div>
<div class="a" style="left:1063px;top:698px;width:1px;height:22px;background:#3b3a36"></div>
<div class="a" style="left:1091px;top:698px;width:1px;height:22px;background:#3b3a36"></div>
<div class="a" style="left:1007px;top:699px;width:28px;height:20px;background:#e26f47;border:1px solid #f5d6c8"></div>
<div class="a" style="left:1011px;top:700px;width:12px;height:18px;background:#e99a80;border:1px solid #f8e0d2"></div>
<div class="a" style="left:1024px;top:702px;width:3px;height:14px;background:#4a2a7a"></div>



<!-- chrome window frame -->
<div class="a" style="left:300px;top:49px;width:458px;height:616px;background:#353430;border-radius:5px 5px 0 0;box-shadow:0 0 2px rgba(0,0,0,.4)"></div>
<div class="a" style="left:300px;top:49px;width:458px;height:38px;background:linear-gradient(#4f4e48,#3c3b37 60%);border-radius:5px 5px 0 0;border-top:1px solid #76756e"></div>
<!-- window buttons -->
<div class="a" style="left:684px;top:52px;width:21px;height:16px;border:1px solid #2c2b28;border-radius:3px;background:linear-gradient(#4a4944,#3a3935);box-shadow:inset 0 1px 0 #5a5953"></div>
<div class="a" style="left:708px;top:52px;width:21px;height:16px;border:1px solid #2c2b28;border-radius:3px;background:linear-gradient(#4a4944,#3a3935);box-shadow:inset 0 1px 0 #5a5953"></div>
<div class="a" style="left:732px;top:52px;width:21px;height:16px;border:1px solid #2c2b28;border-radius:3px;background:linear-gradient(#4a4944,#3a3935);box-shadow:inset 0 1px 0 #5a5953"></div>
<div class="a" style="left:690px;top:61px;width:9px;height:2px;background:#e8e6e0"></div>
<div class="a" style="left:714px;top:56px;width:10px;height:8px;border:1.5px solid #e8e6e0;border-top-width:2px;border-radius:1px"></div>
<svg class="a" style="left:737px;top:55px" width="11" height="10" viewBox="0 0 11 10"><path d="M1.5 1l8 8M9.5 1l-8 8" stroke="#e8e6e0" stroke-width="1.5"/></svg>
<!-- tabs -->
<svg class="a" style="left:303px;top:64px" width="220" height="24" viewBox="0 0 220 24">
<path d="M0 23.5 L10 2 Q11 0.5 13 0.5 L180 0.5 Q182 0.5 183 2 L193 23.5z" fill="#f3f2f0" stroke="#2a2926" stroke-width="0.8"/>
<path d="M192.5 5.5 Q193 4.5 195 4.5 L213 4.5 Q215 4.5 216 6 L220.5 18.5 L197 18.5z" fill="#a3a29d" stroke="#2e2d2a" stroke-width="1"/>
</svg>
<svg class="a" style="left:325px;top:70px" width="10" height="13" viewBox="0 0 10 13"><path d="M7 1 C9.5 4.5 8 10 1.5 11.8" fill="none" stroke="#b4513b" stroke-width="2.2" stroke-linecap="round"/></svg>
<div class="t" style="left:338px;top:69px;font-size:13.8px;color:#3b3b3b;letter-spacing:0.4px">Insert title here</div>
<svg class="a" style="left:473px;top:71px" width="9" height="9" viewBox="0 0 9 9"><path d="M1 1l7 7M8 1l-7 7" stroke="#555" stroke-width="1.3"/></svg>
<!-- toolbar -->
<div class="a" style="left:303px;top:87px;width:451px;height:36px;background:#f2f1ef;border-bottom:1px solid #9e9d99"></div>
<svg class="a" style="left:314px;top:96px" width="10" height="16" viewBox="0 0 10 16"><path d="M8 1.5 L2.5 8 L8 14.5" fill="none" stroke="#cfcfcc" stroke-width="2.6"/></svg>
<svg class="a" style="left:343px;top:96px" width="10" height="16" viewBox="0 0 10 16"><path d="M2 1.5 L7.5 8 L2 14.5" fill="none" stroke="#cfcfcc" stroke-width="2.6"/></svg>
<svg class="a" style="left:365px;top:94px" width="19" height="19" viewBox="0 0 19 19">
<defs><radialGradient id="rg" cx="50%" cy="35%" r="65%"><stop offset="0" stop-color="#ea3b4a"/><stop offset="1" stop-color="#b5101f"/></radialGradient></defs>
<circle cx="9.5" cy="9.5" r="8.5" fill="url(#rg)" stroke="#9c0d1a" stroke-width="0.6"/>
<path d="M6.3 6.3l6.4 6.4M12.7 6.3l-6.4 6.4" stroke="#fff" stroke-width="2"/></svg>
<div class="a" style="left:393px;top:92px;width:330px;height:25px;background:#fff;border:1px solid #c0bfbb;border-radius:3px"></div>
<svg class="a" style="left:399px;top:97px" width="12" height="15" viewBox="0 0 12 15"><path d="M0.5 0.5h7.5l3.5 3.5v10.5H0.5z" fill="#fafafa" stroke="#9a9a98" stroke-width="0.9"/><path d="M8 0.5v3.5h3.5" fill="none" stroke="#9a9a98" stroke-width="0.9"/></svg>
<div style="position:absolute;left:417.5px;top:96px;width:281px;height:20px;overflow:hidden"><div class="t" style="left:0;top:0.5px;font-size:15px;color:#333;letter-spacing:0.27px">file:///var/lib/tomcat7/webapps/ROOT/CRUD</div></div>
<svg class="a" style="left:702px;top:95px" width="18" height="17" viewBox="0 0 18 17"><path d="M9 1 L11.2 6.2 L16.8 6.5 L12.5 10 L14 15.6 L9 12.5 L4 15.6 L5.5 10 L1.2 6.5 L6.8 6.2z" fill="#fff" stroke="#8a8a88" stroke-width="1.1" stroke-linejoin="round"/></svg>
<div class="a" style="left:732px;top:98px;width:12px;height:2.5px;background:#d98e26"></div>
<div class="a" style="left:732px;top:103px;width:12px;height:2.5px;background:#d98e26"></div>
<div class="a" style="left:732px;top:108px;width:12px;height:2.5px;background:#d98e26"></div>
<!-- page -->
<div class="a" style="left:303px;top:123px;width:451px;height:341px;background:#fdfdfb"></div>
<div class="t serif" style="left:312px;top:145.2px;font-size:29.7px;font-weight:bold;color:#000">CRUD</div>
<div class="a" style="left:341px;top:198px;width:113px;height:23.7px;background:#e0673e"></div>
<div class="t serif" style="left:312px;top:199.8px;font-size:22.5px;font-weight:bold;color:#000">Ap<span style="color:#fff">licación del </span>curso</div>
<div class="a" style="left:312px;top:242px;width:92px;height:20px;background:linear-gradient(#f6f6f5,#dededc);border:1px solid #a9a9a7;border-radius:2px"></div><div class="t" style="left:312px;top:246px;width:92px;text-align:center;font-size:12.4px;color:#111">Leer registros</div><div class="a" style="left:407px;top:242px;width:96px;height:20px;background:linear-gradient(#f6f6f5,#dededc);border:1px solid #a9a9a7;border-radius:2px"></div><div class="t" style="left:407px;top:246px;width:96px;text-align:center;font-size:12.4px;color:#111">Nuevo registro</div><div class="a" style="left:507px;top:242px;width:115px;height:20px;background:linear-gradient(#f6f6f5,#dededc);border:1px solid #a9a9a7;border-radius:2px"></div><div class="t" style="left:507px;top:246px;width:115px;text-align:center;font-size:12.4px;color:#111">Actualizar registro</div><div class="a" style="left:626px;top:242px;width:53px;height:20px;background:linear-gradient(#f6f6f5,#dededc);border:1px solid #a9a9a7;border-radius:2px"></div><div class="t" style="left:626px;top:246px;width:53px;text-align:center;font-size:12.4px;color:#111">Buscar</div><div class="t serif" style="left:312px;top:281.3px;font-size:17.5px;font-weight:bold;color:#000">Esta es la pagina de resultados</div><div class="t serif" style="left:312px;top:319.1px;font-size:17.5px;font-weight:bold;color:#000">Insertar nuevo registro</div><div class="t serif" style="left:312px;top:357.4px;font-size:17.5px;font-weight:bold;color:#000">Actualizar un registro</div><div class="t serif" style="left:312px;top:395.3px;font-size:17.5px;font-weight:bold;color:#000">Buscar un registro</div><svg class="a" style="left:389px;top:286px" width="13" height="20" viewBox="0 0 13 20"><path d="M1 1 L1 16 L4.5 12.5 L7 18.5 L9.5 17.5 L7 11.5 L12 11.5z" fill="#fff" stroke="#000" stroke-width="1" stroke-linejoin="round"/></svg>
<div class="a" style="left:303px;top:464px;width:451px;height:197px;background:#fdfdfb;border-top:1px solid #a3a3a0"></div>
<div class="a" style="left:303px;top:465px;width:451px;height:21px;background:#f1f1ef;border-bottom:1px solid #c4c4c1"></div>
<svg class="a" style="left:312px;top:468px" width="14" height="14" viewBox="0 0 14 14"><circle cx="5.5" cy="5.5" r="4" fill="none" stroke="#666" stroke-width="1.8"/><path d="M8.5 8.5l4 4" stroke="#666" stroke-width="2.2"/></svg>
<svg class="a" style="left:336px;top:467px" width="10" height="15" viewBox="0 0 10 15"><rect x="1" y="0.8" width="8" height="13.4" rx="1.5" fill="#f5f5f5" stroke="#777" stroke-width="1"/><path d="M3 10 L7 3" stroke="#aaa" stroke-width="0.6"/></svg>
<div class="t" style="left:363px;top:468.5px;font-size:11.6px;color:#333">Elements</div>
<div class="t" style="left:421px;top:468.5px;font-size:12px;color:#333">Network</div>
<div class="t" style="left:476px;top:468.5px;font-size:11.8px;color:#333">Sources</div>
<div class="t" style="left:527px;top:468.5px;font-size:11.8px;color:#333">Timeline</div>
<div class="t" style="left:581px;top:468.5px;font-size:11.8px;color:#333">Profiles</div>
<div class="t" style="left:630px;top:468.5px;font-size:12px;color:#444">&#187;</div>
<svg class="a" style="left:659px;top:469px" width="15" height="12" viewBox="0 0 15 12"><path d="M1 1.5l4.5 4.5L1 10.5" fill="none" stroke="#555" stroke-width="1.5"/><path d="M7 2h7M8.5 6h5.5M7 10h7" stroke="#555" stroke-width="1.4"/></svg>
<svg class="a" style="left:685px;top:468px" width="16" height="16" viewBox="0 0 16 16"><g fill="#666"><circle cx="8" cy="8" r="5.2"/>
<rect x="6.6" y="0.8" width="2.8" height="3.5"/><rect x="6.6" y="11.7" width="2.8" height="3.5"/><rect x="0.8" y="6.6" width="3.5" height="2.8"/><rect x="11.7" y="6.6" width="3.5" height="2.8"/>
<g transform="rotate(45 8 8)"><rect x="6.6" y="0.8" width="2.8" height="3.5"/><rect x="6.6" y="11.7" width="2.8" height="3.5"/><rect x="0.8" y="6.6" width="3.5" height="2.8"/><rect x="11.7" y="6.6" width="3.5" height="2.8"/></g></g>
<circle cx="8" cy="8" r="2.3" fill="#f1f1ef"/></svg>
<svg class="a" style="left:711px;top:469px" width="17" height="15" viewBox="0 0 17 15"><rect x="4.5" y="0.8" width="10" height="8" fill="none" stroke="#555" stroke-width="1.4"/><rect x="0.8" y="4.5" width="10" height="8" fill="#f1f1ef" stroke="#555" stroke-width="1.4"/><path d="M13 14.5h3.5V11z" fill="#555"/></svg>
<svg class="a" style="left:737px;top:471px" width="8" height="8" viewBox="0 0 8 8"><path d="M1 1l6 6M7 1l-6 6" stroke="#555" stroke-width="1.3"/></svg>
<!-- sidebar -->
<div class="a" style="left:303px;top:486px;width:190px;height:175px;background:#e9e9e7;border-right:1px solid #c9c9c6"></div>
<div class="a" style="left:493px;top:639px;width:261px;height:22px;background:#ebebe9;border-top:1px solid #d3d3d0"></div>
<!-- bottom frame -->
<div class="a" style="left:300px;top:661.5px;width:458px;height:3.5px;background:#33322e;border-radius:0 0 2px 2px"></div>
<svg class="a" style="left:313px;top:492.4px" width="7" height="8" viewBox="0 0 7 8"><path d="M0 0v8L6.5 4z" fill="#5a5a5a"/></svg><svg class="a" style="left:322px;top:489.4px" width="15" height="15" viewBox="0 0 15 15"><path d="M0.5 2.5h5l1 1.5h7.5v9.5H0.5z" fill="#f7d57a" stroke="#b99440" stroke-width="0.8"/><path d="M0.5 5.5h13.5" stroke="#fbe6a6"/></svg><div class="t" style="left:339px;top:491.4px;font-size:11.2px;color:#333">Frames</div><svg class="a" style="left:312px;top:510.7px" width="8" height="7" viewBox="0 0 8 7"><path d="M0 0h8L4 7z" fill="#5a5a5a"/></svg><svg class="a" style="left:322px;top:507.2px" width="15" height="15" viewBox="0 0 15 15"><ellipse cx="7" cy="2.5" rx="6" ry="2" fill="#ececec" stroke="#8c8c8c" stroke-width="0.8"/><path d="M1 2.5v10c0 2.5 12 2.5 12 0v-10" fill="#d6d6d6" stroke="#8c8c8c" stroke-width="0.8"/><path d="M1 6c0 2.5 12 2.5 12 0M1 9.5c0 2.5 12 2.5 12 0" fill="none" stroke="#9c9c9c" stroke-width="0.8"/></svg><div class="t" style="left:339px;top:509.2px;font-size:11.2px;color:#333">Web SQL</div><svg class="a" style="left:322px;top:525.0px" width="15" height="15" viewBox="0 0 15 15"><ellipse cx="7" cy="2.5" rx="6" ry="2" fill="#f3f0cc" stroke="#a9a57a" stroke-width="0.8"/><path d="M1 2.5v10c0 2.5 12 2.5 12 0v-10" fill="#e5e0a5" stroke="#a9a57a" stroke-width="0.8"/><path d="M1 6c0 2.5 12 2.5 12 0M1 9.5c0 2.5 12 2.5 12 0" fill="none" stroke="#aaa67a" stroke-width="0.8"/></svg><div class="t" style="left:339px;top:527.0px;font-size:11.2px;color:#333">IndexedDB</div><svg class="a" style="left:313px;top:545.8px" width="7" height="8" viewBox="0 0 7 8"><path d="M0 0v8L6.5 4z" fill="#5a5a5a"/></svg><svg class="a" style="left:322px;top:542.8px" width="15" height="15" viewBox="0 0 15 15"><rect x="0.5" y="0.5" width="13" height="13" fill="#b7bde0" stroke="#7f86b8" stroke-width="0.9"/><path d="M0.5 4.8h13M0.5 9.2h13M5 0.5v13M9.5 0.5v13" stroke="#7f86b8" stroke-width="0.7"/></svg><div class="t" style="left:339px;top:544.8px;font-size:11.2px;color:#333">Local Storage</div><svg class="a" style="left:313px;top:563.6px" width="7" height="8" viewBox="0 0 7 8"><path d="M0 0v8L6.5 4z" fill="#5a5a5a"/></svg><svg class="a" style="left:322px;top:560.6px" width="15" height="15" viewBox="0 0 15 15"><rect x="0.5" y="0.5" width="13" height="13" fill="#e3b4c4" stroke="#b07d91" stroke-width="0.9"/><path d="M0.5 4.8h13M0.5 9.2h13M5 0.5v13M9.5 0.5v13" stroke="#b07d91" stroke-width="0.7"/></svg><div class="t" style="left:339px;top:562.6px;font-size:11.2px;color:#333">Session Storage</div><svg class="a" style="left:313px;top:581.4px" width="7" height="8" viewBox="0 0 7 8"><path d="M0 0v8L6.5 4z" fill="#5a5a5a"/></svg><svg class="a" style="left:322px;top:578.4px" width="15" height="15" viewBox="0 0 15 15"><rect x="0.5" y="0.5" width="13" height="13" fill="#cfe3a8" stroke="#8aa86a" stroke-width="0.9"/><path d="M0.5 4.8h13M0.5 9.2h13M5 0.5v13M9.5 0.5v13" stroke="#8aa86a" stroke-width="0.7"/><circle cx="9" cy="9" r="4" fill="#e9cf4a" stroke="#a58a20" stroke-width="0.7"/></svg><div class="t" style="left:339px;top:580.4px;font-size:11.2px;color:#333">Cookies</div><svg class="a" style="left:322px;top:596.2px" width="15" height="15" viewBox="0 0 15 15"><rect x="0.5" y="0.5" width="13" height="13" fill="#e0a468" stroke="#a86c30" stroke-width="0.9"/><path d="M0.5 4.8h13M0.5 9.2h13M5 0.5v13M9.5 0.5v13" stroke="#a86c30" stroke-width="0.7"/></svg><div class="t" style="left:339px;top:598.2px;font-size:11.2px;color:#333">Application Cache</div>

</body></html>
